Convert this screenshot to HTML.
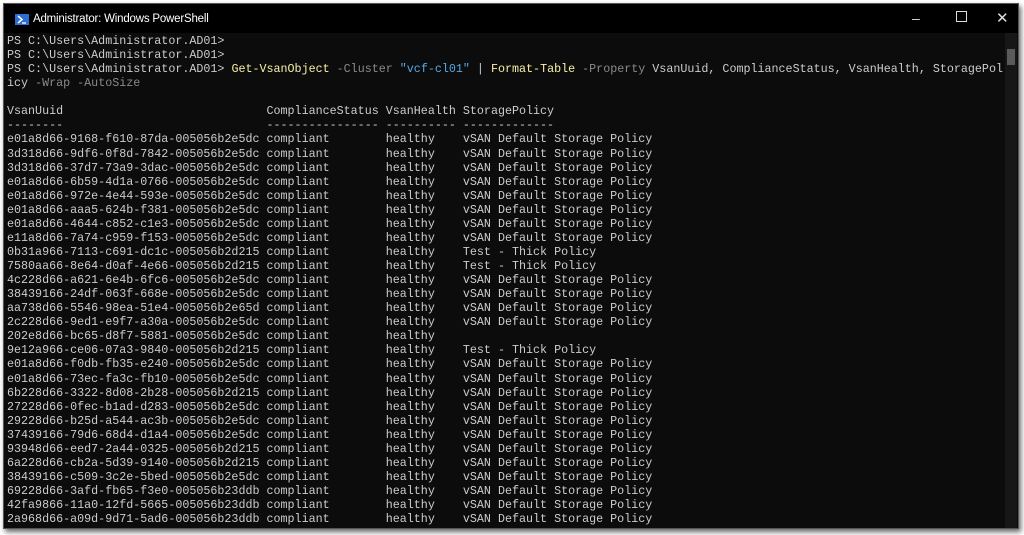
<!DOCTYPE html>
<html><head><meta charset="utf-8"><style>
html,body{margin:0;padding:0;background:#fff;width:1024px;height:535px;overflow:hidden}
.win{position:absolute;left:3px;top:3px;width:1014px;height:524px;background:#0c0c0c;border:1px solid #555;box-shadow:2px 3px 5px rgba(0,0,0,.6)}
.title{position:absolute;left:0;top:0;width:100%;height:29px;background:#000;color:#fff;font:12px "Liberation Sans",sans-serif}
.title .t{position:absolute;left:29px;top:9px;font-size:11.5px;letter-spacing:-.2px}
.icon{position:absolute;left:11px;top:10px;width:14px;height:11px;background:#2d6fd0}
pre{position:absolute;left:3px;top:30px;margin:0;font-family:"Liberation Mono",monospace;font-size:11.7px;line-height:14.07px;color:#cccccc;white-space:pre}
.y{color:#f9f1a5}.g{color:#8a8a8a}.b{color:#56a8e6}
.sb{position:absolute;left:1001px;top:29px;width:12px;height:495px;background:#171717}
.th{position:absolute;left:1003px;top:45px;width:8px;height:16px;background:#5a5a5a}
.ctl{position:absolute;top:6px;color:#ddd;font:14px "Liberation Sans",sans-serif}
</style></head><body>
<div class="win">
<div class="title"><div class="icon"><svg width="14" height="11"><path d="M3 2 L7 5.5 L3 9" stroke="#fff" stroke-width="1.5" fill="none"/><path d="M7 9 H11" stroke="#fff" stroke-width="1.3"/></svg></div><span class="t">Administrator: Windows PowerShell</span>
<span class="ctl" style="left:908px">&#8211;</span>
<span class="ctl" style="left:952px;top:7px;width:9px;height:9px;border:1px solid #ddd"></span>
<span class="ctl" style="left:992px;top:5px;font-size:15px">&#10005;</span>
</div>
<pre>PS C:\Users\Administrator.AD01>
PS C:\Users\Administrator.AD01>
PS C:\Users\Administrator.AD01> <span class="y">Get-VsanObject</span> <span class="g">-Cluster</span> <span class="b">"vcf-cl01"</span> | <span class="y">Format-Table</span> <span class="g">-Property</span> VsanUuid, ComplianceStatus, VsanHealth, StoragePol
icy <span class="g">-Wrap</span> <span class="g">-AutoSize</span>

VsanUuid                             ComplianceStatus VsanHealth StoragePolicy
--------                             ---------------- ---------- -------------
e01a8d66-9168-f610-87da-005056b2e5dc compliant        healthy    vSAN Default Storage Policy
3d318d66-9df6-0f8d-7842-005056b2e5dc compliant        healthy    vSAN Default Storage Policy
3d318d66-37d7-73a9-3dac-005056b2e5dc compliant        healthy    vSAN Default Storage Policy
e01a8d66-6b59-4d1a-0766-005056b2e5dc compliant        healthy    vSAN Default Storage Policy
e01a8d66-972e-4e44-593e-005056b2e5dc compliant        healthy    vSAN Default Storage Policy
e01a8d66-aaa5-624b-f381-005056b2e5dc compliant        healthy    vSAN Default Storage Policy
e01a8d66-4644-c852-c1e3-005056b2e5dc compliant        healthy    vSAN Default Storage Policy
e11a8d66-7a74-c959-f153-005056b2e5dc compliant        healthy    vSAN Default Storage Policy
0b31a966-7113-c691-dc1c-005056b2d215 compliant        healthy    Test - Thick Policy
7580aa66-8e64-d0af-4e66-005056b2d215 compliant        healthy    Test - Thick Policy
4c228d66-a621-6e4b-6fc6-005056b2e5dc compliant        healthy    vSAN Default Storage Policy
38439166-24df-063f-668e-005056b2e5dc compliant        healthy    vSAN Default Storage Policy
aa738d66-5546-98ea-51e4-005056b2e65d compliant        healthy    vSAN Default Storage Policy
2c228d66-9ed1-e9f7-a30a-005056b2e5dc compliant        healthy    vSAN Default Storage Policy
202e8d66-bc65-d8f7-5881-005056b2e5dc compliant        healthy
9e12a966-ce06-07a3-9840-005056b2d215 compliant        healthy    Test - Thick Policy
e01a8d66-f0db-fb35-e240-005056b2e5dc compliant        healthy    vSAN Default Storage Policy
e01a8d66-73ec-fa3c-fb10-005056b2e5dc compliant        healthy    vSAN Default Storage Policy
6b228d66-3322-8d08-2b28-005056b2d215 compliant        healthy    vSAN Default Storage Policy
27228d66-0fec-b1ad-d283-005056b2e5dc compliant        healthy    vSAN Default Storage Policy
29228d66-b25d-a544-ac3b-005056b2e5dc compliant        healthy    vSAN Default Storage Policy
37439166-79d6-68d4-d1a4-005056b2e5dc compliant        healthy    vSAN Default Storage Policy
93948d66-eed7-2a44-0325-005056b2d215 compliant        healthy    vSAN Default Storage Policy
6a228d66-cb2a-5d39-9140-005056b2d215 compliant        healthy    vSAN Default Storage Policy
38439166-c509-3c2e-5bed-005056b2e5dc compliant        healthy    vSAN Default Storage Policy
69228d66-3afd-fb65-f3e0-005056b23ddb compliant        healthy    vSAN Default Storage Policy
42fa9866-11a0-12fd-5665-005056b23ddb compliant        healthy    vSAN Default Storage Policy
2a968d66-a09d-9d71-5ad6-005056b23ddb compliant        healthy    vSAN Default Storage Policy</pre>
<div class="sb"></div><div class="th"></div>
</div>
</body></html>
